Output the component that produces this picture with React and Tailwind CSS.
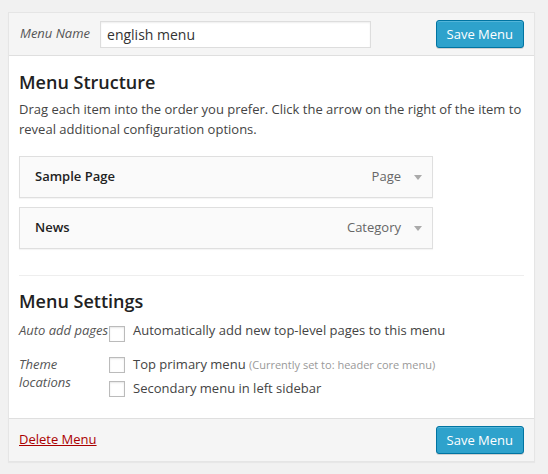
import React from "react";

function Checkbox() {
  return (
    <span className="block w-[16px] h-[16px] shrink-0 border border-[#bbbbbb] bg-white shadow-[inset_0_1px_2px_rgba(0,0,0,0.1)]" />
  );
}

function Arrow() {
  return (
    <svg width="8" height="5" viewBox="0 0 8 5" className="block">
      <polygon points="0,0 8,0 4,5" fill="#aaaaaa" />
    </svg>
  );
}

function MenuItem({ title, type }) {
  return (
    <div className="w-[414px] h-[42px] border border-[#dfdfdf] bg-[#fafafa] flex items-center pl-[15px] pr-[10px] shadow-[0_1px_1px_rgba(0,0,0,0.04)]">
      <span className="font-semibold text-[13px] text-[#222222]">{title}</span>
      <span className="ml-auto mr-[13px] text-[13px] text-[#666666]">{type}</span>
      <Arrow />
    </div>
  );
}

function SaveButton() {
  return (
    <button className="h-[28px] px-[10px] rounded-[3px] border border-[#0074a2] bg-[#2ea2cc] text-white text-[13px] leading-[26px] shadow-[inset_0_1px_0_rgba(120,200,230,0.5),0_1px_0_rgba(0,0,0,0.15)]">
      Save Menu
    </button>
  );
}

export default function App() {
  return (
    <div
      className="min-h-screen bg-[#f1f1f1] pt-[12px] pl-[8px] text-[13px] text-[#444444]"
      style={{ fontFamily: '"Open Sans", "Noto Sans", sans-serif' }}
    >
      <div className="w-[527px] border border-[#e5e5e5] bg-white shadow-[0_1px_1px_rgba(0,0,0,0.04)]">
        {/* Header */}
        <div className="h-[43px] bg-[#f5f5f5] border-b border-[#dfdfdf] flex items-center pl-[11px] pr-[10px]">
          <span className="italic text-[13px] text-[#555555]">Menu Name</span>
          <input
            readOnly
            value="english menu"
            className="ml-[10px] w-[271px] h-[27px] border border-[#dddddd] bg-white px-[6px] text-[14px] text-[#333333] shadow-[inset_0_1px_2px_rgba(0,0,0,0.07)] outline-none"
          />
          <div className="ml-auto">
            <SaveButton />
          </div>
        </div>

        {/* Body */}
        <div className="pt-[14px] pl-[10px] pr-[10px] pb-[17px]">
          <h3 className="text-[18px] leading-[24px] font-semibold text-[#222222]">Menu Structure</h3>
          <p className="mt-[6px] leading-[19.5px] text-[#444444]">
            Drag each item into the order you prefer. Click the arrow on the right of the item to reveal additional configuration options.
          </p>
          <div className="mt-[17px] flex flex-col gap-[9px]">
            <MenuItem title="Sample Page" type="Page" />
            <MenuItem title="News" type="Category" />
          </div>

          <div className="mt-[26px] border-t border-[#eeeeee]" />

          <h3 className="mt-[13px] text-[18px] leading-[24px] font-semibold text-[#222222]">Menu Settings</h3>

          <div className="mt-[8px] flex items-start">
            <span className="w-[90px] shrink-0 italic leading-[19.5px] text-[#555555]">Auto add pages</span>
            <span className="mt-[5px]">
              <Checkbox />
            </span>
            <span className="ml-[8px] leading-[19.5px] text-[#444444]">
              Automatically add new top-level pages to this menu
            </span>
          </div>

          <div className="mt-[11px] flex items-start">
            <span className="w-[90px] shrink-0 mt-[2px] italic leading-[18px] text-[#555555]">
              Theme
              <br />
              locations
            </span>
            <div className="flex flex-col">
              <div className="h-[24px] flex items-center">
                <Checkbox />
                <span className="ml-[8px] leading-[19.5px] text-[#444444]">
                  Top primary menu{" "}
                  <span className="text-[11px] text-[#999999]">(Currently set to: header core menu)</span>
                </span>
              </div>
              <div className="h-[24px] flex items-center">
                <Checkbox />
                <span className="ml-[8px] leading-[19.5px] text-[#444444]">Secondary menu in left sidebar</span>
              </div>
            </div>
          </div>
        </div>

        {/* Footer */}
        <div className="h-[43px] bg-[#f5f5f5] border-t border-[#dfdfdf] flex items-center pl-[10px] pr-[10px]">
          <a href="#" className="text-[13px] text-[#aa0000] underline">Delete Menu</a>
          <div className="ml-auto">
            <SaveButton />
          </div>
        </div>
      </div>
    </div>
  );
}
